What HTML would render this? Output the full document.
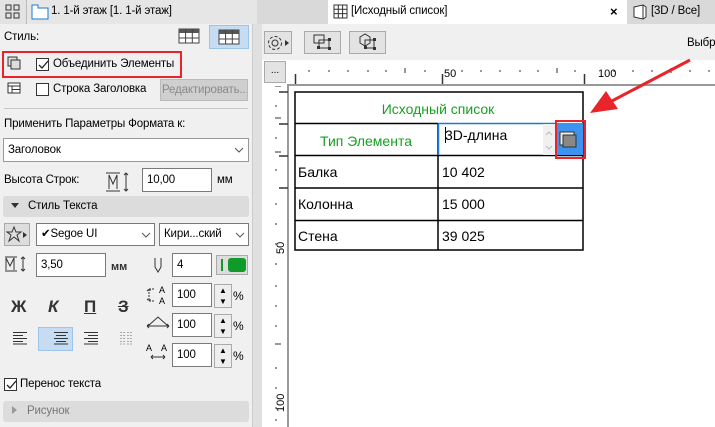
<!DOCTYPE html>
<html><head><meta charset="utf-8"><style>
*{box-sizing:border-box;margin:0;padding:0}
body{width:715px;height:427px;overflow:hidden;position:relative;background:#f0f0f0;font-family:"Liberation Sans","DejaVu Sans",sans-serif;font-size:12px;color:#000}
.a{position:absolute}
.in{position:absolute;background:#fff;border:1px solid #7a7a7a;padding-left:4px;line-height:22px;font-size:12px}
.cb{position:absolute;width:13px;height:13px;border:1px solid #333;background:#fff}
.t{position:absolute;white-space:nowrap}
.lp{font-size:11.5px;letter-spacing:-0.15px}
.sp{position:absolute;width:18px;height:24px;border:1px solid #aaa;background:#eee;font-size:8px;text-align:center;line-height:11px}
</style></head><body>
<div class="a" style="left:0;top:0;width:715px;height:24px;background:#d9d9d9"></div>
<div class="a" style="left:0;top:0;width:27px;height:24px;background:#e3e3e3;border-right:1px solid #bbb"></div>
<svg class="a" style="left:5px;top:4px" width="16" height="16"><g fill="none" stroke="#333"><rect x="1" y="1" width="5" height="5"/><rect x="9" y="1" width="5" height="5"/><rect x="1" y="9" width="5" height="5"/><rect x="9" y="9" width="5" height="5"/></g></svg>
<div class="a" style="left:27px;top:0;width:230px;height:24px;background:#e6e6e6"></div>
<svg class="a" style="left:31px;top:4px" width="18" height="16"><path d="M1 1h6v3h10v11H1z" fill="#fff" stroke="#1a7ad4"/></svg>
<div class="t lp" style="left:51px;top:5px">1. 1-й этаж [1. 1-й этаж]</div>
<div class="a" style="left:328px;top:0;width:299px;height:24px;background:#fff"></div>
<svg class="a" style="left:333px;top:4px" width="15" height="15"><g fill="none" stroke="#333"><rect x="1" y="1" width="13" height="13"/><path d="M5.3 1v13M9.6 1v13M1 5.3h13M1 9.6h13"/></g></svg>
<div class="t lp" style="left:351px;top:5px">[Исходный список]</div>
<div class="t" style="left:610px;top:4px;font-size:13px;font-weight:bold">×</div>
<svg class="a" style="left:632px;top:4px" width="16" height="16"><path d="M2 3l9-2v14l-9-2zM11 1l3 2v10l-3 2" fill="#fff" stroke="#333"/></svg>
<div class="t lp" style="left:651px;top:5px">[3D / Все]</div>

<div class="a" style="left:0;top:24px;width:252px;height:403px;background:#f0f0f0"></div>
<div class="a" style="left:252px;top:24px;width:10px;height:403px;background:#e0e0e0;border-left:1px solid #ccc"></div>
<div class="t lp" style="left:4px;top:31px">Стиль:</div>
<svg class="a" style="left:178px;top:28px" width="22" height="16"><rect x="1" y="1" width="20" height="14" fill="#fff" stroke="#444"/><rect x="1" y="1" width="20" height="4" fill="#555"/><path d="M1 10h20M7.6 1v14M14.3 1v14" stroke="#444"/></svg>
<div class="a" style="left:209px;top:25px;width:40px;height:24px;background:#c5dcf2;border:1px solid #9cc3e8"></div>
<svg class="a" style="left:218px;top:29px" width="22" height="16"><rect x="1" y="1" width="20" height="14" fill="#fff" stroke="#444"/><rect x="1" y="1" width="20" height="4" fill="#555"/><path d="M1 10h20M7.6 1v14M14.3 1v14" stroke="#444"/></svg>
<div class="a" style="left:2px;top:51px;width:180px;height:27px;border:2px solid #e8252a"></div>
<svg class="a" style="left:7px;top:56px" width="14" height="14"><rect x="1" y="1" width="9" height="9" fill="#ddd" stroke="#333"/><rect x="4" y="4" width="9" height="9" fill="#ddd" stroke="#333"/></svg>
<div class="cb" style="left:36px;top:58px"></div>
<svg class="a" style="left:37px;top:59px" width="12" height="12"><path d="M2 6l3 3 6-7" fill="none" stroke="#222" stroke-width="1.3"/></svg>
<div class="t lp" style="left:53px;top:58px">Объединить Элементы</div>
<svg class="a" style="left:7px;top:82px" width="14" height="12"><rect x="1" y="1" width="12" height="10" fill="#fff" stroke="#333"/><path d="M1 4h12M5 4v7M5 7.5h8" stroke="#333"/></svg>
<div class="cb" style="left:36px;top:83px"></div>
<div class="t lp" style="left:53px;top:83px">Строка Заголовка</div>
<div class="a lp" style="left:160px;top:79px;width:88px;height:22px;background:#cfcfcf;border:1px solid #bbb;color:#8a8a8a;line-height:20px;padding-left:1px;white-space:nowrap;overflow:hidden">Редактировать...</div>
<div class="a" style="left:4px;top:108px;width:244px;height:1px;background:#c8c8c8"></div>
<div class="t lp" style="left:4px;top:118px">Применить Параметры Формата к:</div>
<div class="in lp" style="left:3px;top:138px;width:246px;height:24px;border-color:#999">Заголовок</div>
<svg class="a" style="left:234px;top:146px" width="10" height="8"><path d="M1 2l4 4 4-4" fill="none" stroke="#555"/></svg>
<div class="t lp" style="left:4px;top:174px">Высота Строк:</div>
<svg class="a" style="left:104px;top:170px" width="26" height="24"><path d="M2 3h14M2 21h14M5 19V5l4 9 4-9v14" fill="none" stroke="#333"/><path d="M22 3v18M20 5l2-2 2 2M20 19l2 2 2-2" fill="none" stroke="#333"/></svg>
<div class="in lp" style="left:142px;top:168px;width:70px;height:24px">10,00</div>
<div class="t lp" style="left:217px;top:174px">мм</div>
<div class="a" style="left:3px;top:196px;width:246px;height:21px;background:#dcdcdc;border-radius:3px"></div>
<svg class="a" style="left:11px;top:203px" width="9" height="6"><path d="M0 0h8l-4 5z" fill="#333"/></svg>
<div class="t lp" style="left:28px;top:200px">Стиль Текста</div>
<div class="a" style="left:4px;top:223px;width:26px;height:23px;background:#ddd;border:1px solid #aaa"></div>
<svg class="a" style="left:6px;top:226px" width="22" height="17"><path d="M8 1l2 5h5l-4 3 2 6-5-4-5 4 2-6-4-3h5z" fill="none" stroke="#333"/><path d="M17 6l4 3-4 3z" fill="#333"/></svg>
<div class="in lp" style="left:36px;top:223px;width:119px;height:23px;line-height:21px">✔Segoe UI</div>
<svg class="a" style="left:141px;top:231px" width="10" height="8"><path d="M1 2l4 4 4-4" fill="none" stroke="#555"/></svg>
<div class="in lp" style="left:159px;top:223px;width:90px;height:23px;line-height:21px">Кири...ский</div>
<svg class="a" style="left:235px;top:231px" width="10" height="8"><path d="M1 2l4 4 4-4" fill="none" stroke="#555"/></svg>
<svg class="a" style="left:4px;top:255px" width="24" height="18"><path d="M1 2h12M1 16h12M2 15V3l4 8 4-8v12" fill="none" stroke="#333"/><path d="M19 2v14M17 4l2-2 2 2M17 14l2 2 2-2" fill="none" stroke="#333"/></svg>
<div class="in lp" style="left:36px;top:253px;width:70px;height:24px">3,50</div>
<div class="t" style="left:111px;top:261px;font-size:11px;font-weight:bold;color:#333">мм</div>
<svg class="a" style="left:153px;top:257px" width="10" height="16"><path d="M2 1v9l3 5 3-5V1" fill="none" stroke="#333"/></svg>
<div class="in lp" style="left:172px;top:253px;width:40px;height:24px">4</div>
<div class="a" style="left:216px;top:255px;width:32px;height:20px;background:#ddd;border:1px solid #aaa"></div>
<div class="a" style="left:221px;top:259px;width:2px;height:12px;background:#109a2a"></div>
<div class="a" style="left:228px;top:258px;width:18px;height:14px;background:#109a2a;border-radius:3px"></div>
<div class="t" style="left:11px;top:297px;font-size:17px;font-weight:bold;color:#333">Ж</div>
<div class="t" style="left:48px;top:297px;font-size:17px;font-weight:bold;font-style:italic;color:#333">К</div>
<div class="t" style="left:84px;top:297px;font-size:17px;font-weight:bold;color:#333;text-decoration:underline">П</div>
<div class="t" style="left:118px;top:297px;font-size:17px;font-weight:bold;color:#333;text-decoration:line-through">З</div>
<div class="a" style="left:38px;top:327px;width:35px;height:24px;background:#c5dcf2;border:1px solid #9cc3e8"></div>
<svg class="a" style="left:12px;top:331px" width="130" height="14"><g stroke="#333"><path d="M1 1.5h14M1 4.5h10M1 7.5h14M1 10.5h10M1 13h14"/><path d="M42 1.5h14M44 4.5h10M42 7.5h14M44 10.5h10M42 13h14"/><path d="M72 1.5h14M76 4.5h10M72 7.5h14M76 10.5h10M72 13h14"/></g><g stroke="#aaa" stroke-dasharray="2 1"><path d="M108 1.5h5M115 1.5h5M108 4.5h5M115 4.5h5M108 7.5h5M115 7.5h5M108 10.5h5M115 10.5h5M108 13h5M115 13h5"/></g></svg>
<svg class="a" style="left:146px;top:283px" width="24" height="22"><g fill="none" stroke="#333" stroke-width="1"><path d="M3 6v12M1 8l2-2 2 2M1 16l2 2 2-2M3 6h6M3 18h6" stroke-dasharray="2 1"/></g><text x="13" y="10" font-size="9" font-family="Liberation Sans">A</text><text x="13" y="21" font-size="9" font-family="Liberation Sans">A</text></svg>
<div class="in lp" style="left:172px;top:283px;width:40px;height:24px">100</div>
<div class="sp" style="left:214px;top:284px">▲<br>▼</div>
<div class="t" style="left:233px;top:289px">%</div>
<svg class="a" style="left:146px;top:314px" width="24" height="16"><path d="M2 12L12 3l10 9zM1 12h22M1 12l2-2M1 12l2 2M23 12l-2-2M23 12l-2 2" fill="none" stroke="#333"/></svg>
<div class="in lp" style="left:172px;top:313px;width:40px;height:24px">100</div>
<div class="sp" style="left:214px;top:314px">▲<br>▼</div>
<div class="t" style="left:233px;top:319px">%</div>
<svg class="a" style="left:146px;top:342px" width="24" height="20"><text x="0" y="9" font-size="9" font-family="Liberation Sans">A</text><text x="15" y="9" font-size="9" font-family="Liberation Sans">A</text><path d="M5 15h14M5 15l2-2M5 15l2 2M19 15l-2-2M19 15l-2 2" fill="none" stroke="#333"/></svg>
<div class="in lp" style="left:172px;top:343px;width:40px;height:24px">100</div>
<div class="sp" style="left:214px;top:344px">▲<br>▼</div>
<div class="t" style="left:233px;top:349px">%</div>
<div class="cb" style="left:4px;top:378px"></div>
<svg class="a" style="left:5px;top:379px" width="12" height="12"><path d="M2 6l3 3 6-7" fill="none" stroke="#222" stroke-width="1.3"/></svg>
<div class="t lp" style="left:20px;top:378px">Перенос текста</div>
<div class="a" style="left:3px;top:401px;width:246px;height:21px;background:#dcdcdc;border-radius:3px"></div>
<svg class="a" style="left:12px;top:406px" width="6" height="9"><path d="M0 0l5 4-5 4z" fill="#999"/></svg>
<div class="t lp" style="left:27px;top:405px;color:#777">Рисунок</div>

<div class="a" style="left:262px;top:24px;width:453px;height:36px;background:#f0f0f0"></div>
<div class="a" style="left:264px;top:31px;width:28px;height:23px;border:1px solid #aaa;background:#e3e3e3"></div>
<svg class="a" style="left:267px;top:34px" width="24" height="18"><circle cx="8" cy="9" r="3" fill="none" stroke="#333"/><circle cx="8" cy="9" r="6.5" fill="none" stroke="#333" stroke-dasharray="3 2"/><path d="M18 6l4 3-4 3z" fill="#333"/></svg>
<div class="a" style="left:304px;top:31px;width:37px;height:23px;border:1px solid #aaa;background:#e3e3e3"></div>
<svg class="a" style="left:312px;top:33px" width="22" height="19"><rect x="2" y="2" width="10" height="8" fill="none" stroke="#333"/><rect x="7" y="7" width="10" height="8" fill="none" stroke="#333"/><g fill="#333"><rect x="5" y="13" width="3" height="3"/><rect x="16" y="5" width="3" height="3"/><rect x="16" y="14" width="3" height="3"/></g></svg>
<div class="a" style="left:349px;top:31px;width:37px;height:23px;border:1px solid #aaa;background:#e3e3e3"></div>
<svg class="a" style="left:358px;top:33px" width="22" height="19"><path d="M2 4l5-3 5 3v6l-5 3-5-3z" fill="none" stroke="#333"/><rect x="7" y="7" width="9" height="8" fill="none" stroke="#333"/><g fill="#333"><rect x="6" y="13" width="3" height="3"/><rect x="15" y="5" width="3" height="3"/><rect x="15" y="14" width="3" height="3"/></g></svg>
<div class="t lp" style="left:687px;top:37px">Выбр</div>

<div class="a" style="left:262px;top:60px;width:453px;height:367px;background:#fff"></div>
<div class="a" style="left:264px;top:61px;width:22px;height:22px;background:#e3e3e3;border:1px solid #aaa;font-size:10px;text-align:center;line-height:18px">...</div>
<div class="a" style="left:288px;top:84px;width:427px;height:2px;background:#999"></div>
<div class="a" style="left:287px;top:84px;width:2px;height:343px;background:#999"></div>
<svg class="a" style="left:262px;top:60px" width="453" height="24">
<g stroke="#333" stroke-width="1.5"><path d="M33.5 14v10M180.5 14v10M322.5 14v10"/></g>
<g stroke="#333"><path d="M47 10v2M67 10v2M86 10v2M106 10v2M124 10v2M143 10v2M163 10v2M200 10v2M219 10v2M238 10v2M258 10v2M276 10v2M295 10v2M313 10v2M352 10v2M371 10v2M390 10v2M409 10v2M428 10v2M447 10v2M143 8v5M295 8v5M409 8v5"/></g>
<text x="182" y="17" font-size="11" font-family="Liberation Sans">50</text>
<text x="336" y="17" font-size="11" font-family="Liberation Sans">100</text>
</svg>
<svg class="a" style="left:262px;top:86px" width="26" height="341">
<g stroke="#333" stroke-width="1.5"><path d="M17 6h10M17 38h10M17 70h10M17 102h10"/></g>
<g stroke="#333"><path d="M13 20h2M13 52h2M13 84h2M13 118h2M13 138h2M13 158h2M13 178h2M13 200h2M13 220h2M13 240h2M13 282h2M13 302h2M13 322h2M13 334h2M13 0h6M13 32h6M13 66h6M13 258h6"/></g>
<text transform="translate(22,168) rotate(-90)" font-size="11" font-family="Liberation Sans">50</text>
<text transform="translate(22,326) rotate(-90)" font-size="11" font-family="Liberation Sans">100</text>
</svg>

<svg class="a" style="left:294px;top:91px" width="292" height="162">
<g stroke="#000" stroke-width="1.5" fill="none">
<rect x="1" y="1" width="288" height="158"/>
<path d="M1 32.5h143M144 32.5v126M1 64.5h288M1 97h288M1 129.5h288"/>
</g>
<path d="M144.5 32v32M144 32.5h118" stroke="#1a7ad4" stroke-width="1.5"/>
<rect x="249" y="33" width="12" height="31" fill="#f0f0f0"/>
<path d="M252 44l3-3 3 3M252 55l3 3 3-3" stroke="#bbb" fill="none"/>
<rect x="262" y="32" width="27" height="32" fill="#3c94f0"/>
<rect x="266" y="41" width="14" height="13" fill="#eee" stroke="#333"/>
<rect x="269" y="44" width="13" height="12" fill="#888" stroke="#333"/>
<rect x="262" y="30" width="29" height="37" fill="none" stroke="#e8252a" stroke-width="2"/>
<text x="144" y="23" text-anchor="middle" font-size="14" fill="#17a01f" font-family="Liberation Sans">Исходный список</text>
<text x="72" y="55" text-anchor="middle" font-size="14" fill="#17a01f" font-family="Liberation Sans">Тип Элемента</text>
<path d="M151.5 36v16" stroke="#000"/>
<text x="151" y="49" font-size="14" font-family="Liberation Sans">3D-длина</text>
<text x="4" y="86" font-size="14" font-family="Liberation Sans">Балка</text>
<text x="4" y="118" font-size="14" font-family="Liberation Sans">Колонна</text>
<text x="4" y="150" font-size="14" font-family="Liberation Sans">Стена</text>
<text x="148" y="86" font-size="14" font-family="Liberation Sans">10 402</text>
<text x="148" y="118" font-size="14" font-family="Liberation Sans">15 000</text>
<text x="148" y="150" font-size="14" font-family="Liberation Sans">39 025</text>
</svg>
<svg class="a" style="left:580px;top:55px" width="120" height="70"><path d="M110 5L30 47" stroke="#e8252a" stroke-width="3"/><path d="M10 58L26 36l12 18z" fill="#e8252a"/></svg>
</body></html>
